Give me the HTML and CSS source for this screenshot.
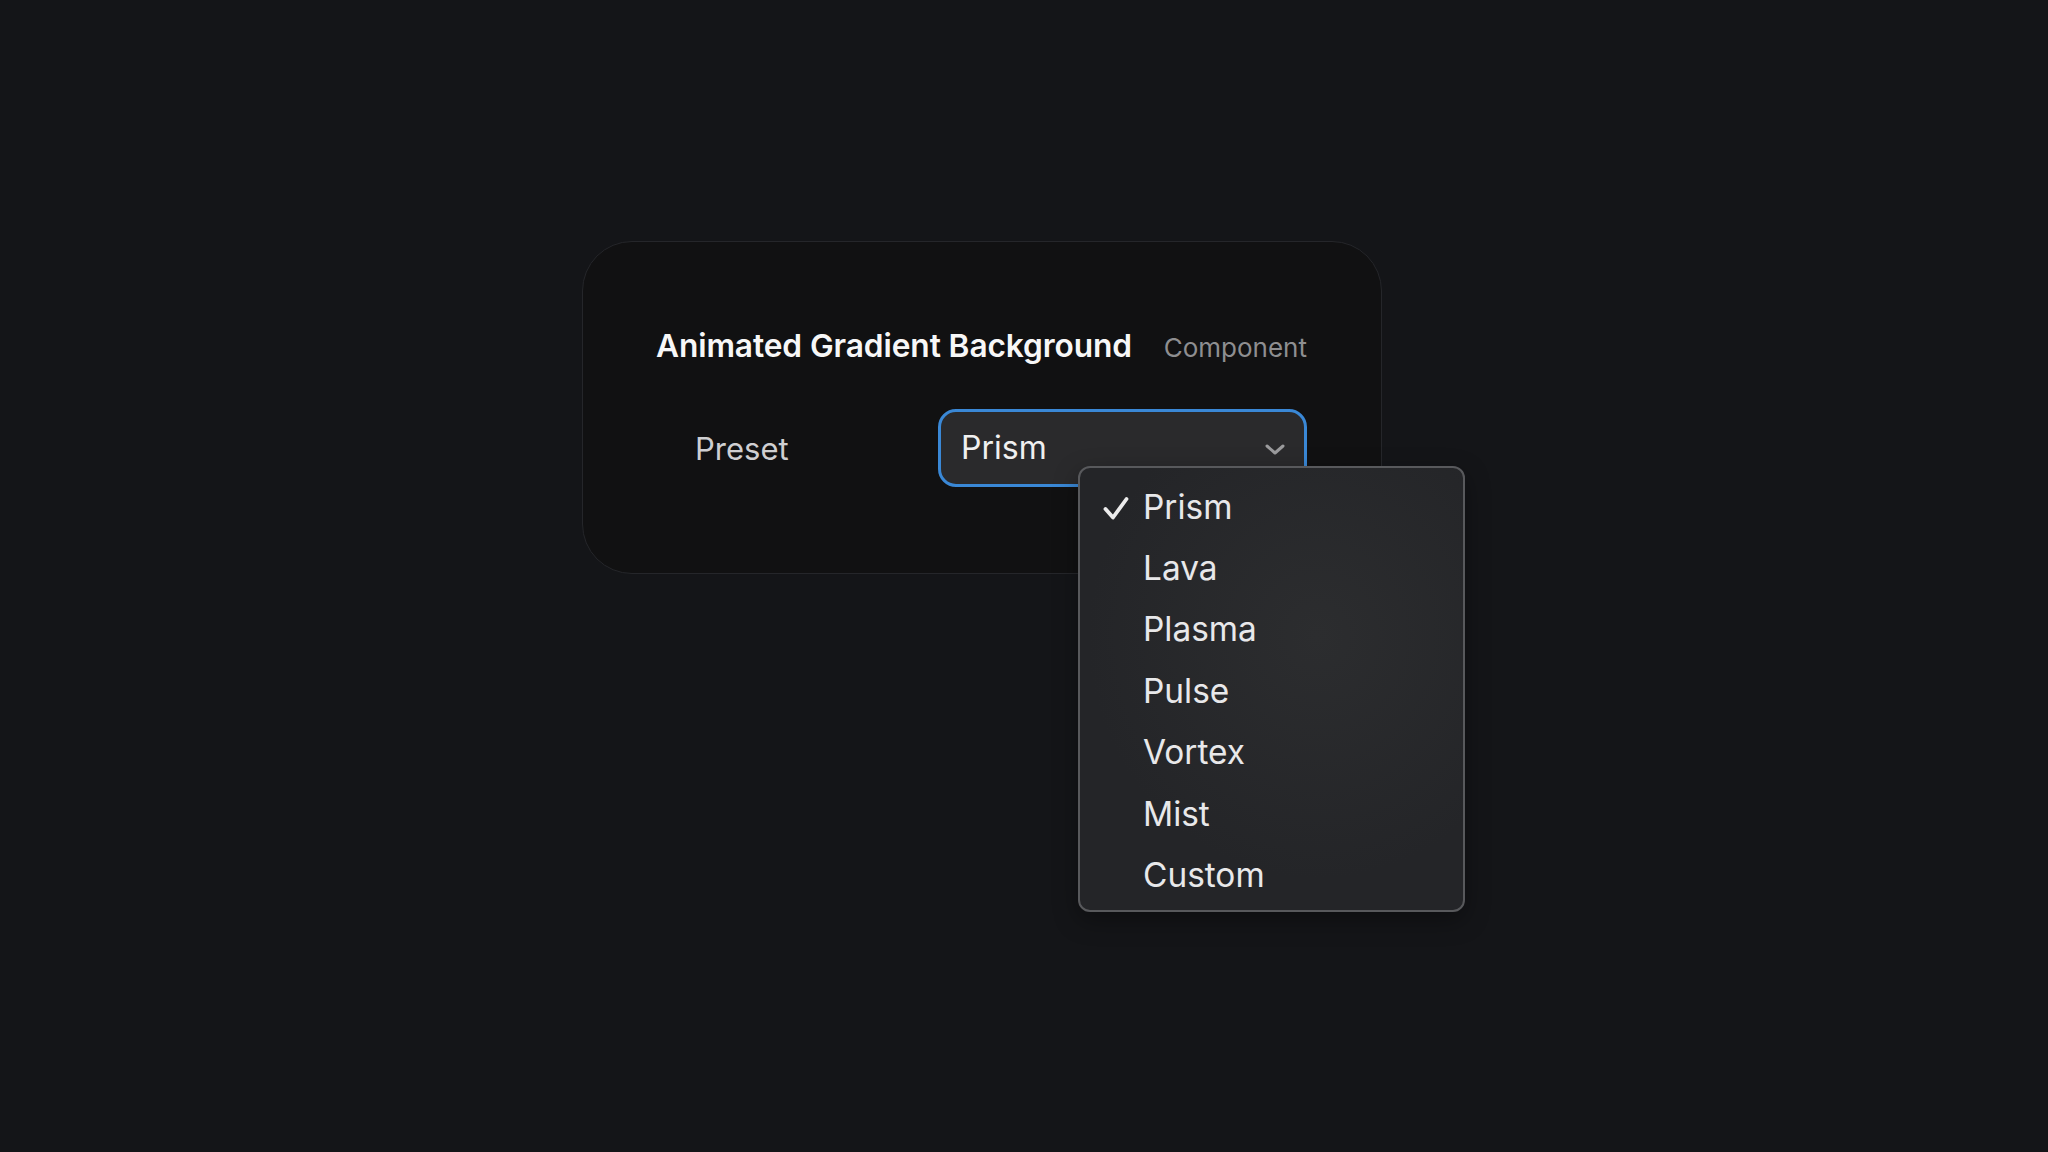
FILE: index.html
```html
<!DOCTYPE html>
<html lang="en">
<head>
<meta charset="utf-8">
<title>Animated Gradient Background</title>
<link rel="stylesheet" href="styles.css">
</head>
<body>
<main class="stage">
  <section class="card">
    <header class="card-head">
      <h1 class="title">Animated Gradient Background</h1>
      <span class="kind">Component</span>
    </header>
    <div class="field">
      <label class="field-label">Preset</label>
      <div class="select-wrap">
        <div class="select">
          <span class="select-value">Prism</span>
          <svg class="chevron" width="20" height="11" viewBox="0 0 20 11"><path d="M2 2 L10 9 L18 2" fill="none" stroke="#9b9b9d" stroke-width="3" stroke-linecap="round" stroke-linejoin="round"/></svg>
        </div>
        <ul class="menu">
          <li class="menu-item selected">
            <span class="check"><svg width="26" height="24" viewBox="0 0 26 24"><path d="M2.5 13 L10 21.5 L23.5 3" fill="none" stroke="#ececec" stroke-width="3.8" stroke-linecap="round" stroke-linejoin="round"/></svg></span>
            <span>Prism</span>
          </li>
          <li class="menu-item"><span class="check"></span><span>Lava</span></li>
          <li class="menu-item"><span class="check"></span><span>Plasma</span></li>
          <li class="menu-item"><span class="check"></span><span>Pulse</span></li>
          <li class="menu-item"><span class="check"></span><span>Vortex</span></li>
          <li class="menu-item"><span class="check"></span><span>Mist</span></li>
          <li class="menu-item"><span class="check"></span><span>Custom</span></li>
        </ul>
      </div>
    </div>
  </section>
</main>
</body>
</html>
```

FILE: styles.css
```css
html, body {
  margin: 0;
  padding: 0;
  background: #141518;
  font-family: Inter, "Noto Sans", "Liberation Sans", sans-serif;
  color: #e8e8e8;
}

.stage {
  width: 2048px;
  height: 1152px;
  box-sizing: border-box;
  padding: 241px 0 0 582px;
}

.card {
  width: 800px;
  height: 333px;
  box-sizing: border-box;
  background: #111112;
  border: 1.5px solid #25262a;
  border-radius: 50px;
  padding: 84px 74px 0 73px;
  display: flex;
  flex-direction: column;
  gap: 43px;
}

.card-head {
  display: flex;
  align-items: baseline;
  justify-content: space-between;
  height: 40px;
}

.title {
  margin: 0;
  font-size: 31.7px;
  font-weight: 600;
  color: #f7f7f7;
  letter-spacing: -0.1px;
  line-height: 40px;
}

.kind {
  font-size: 26px;
  color: #8e8e90;
  line-height: 40px;
}

.field {
  display: flex;
  align-items: center;
}

.field-label {
  font-size: 31px;
  color: #cfcfd1;
  padding-left: 39px;
  width: 282px;
  box-sizing: border-box;
}

.select-wrap {
  position: relative;
}

.select {
  width: 369px;
  height: 78px;
  box-sizing: border-box;
  background: #2a2a2c;
  border: 3px solid #3a88d6;
  border-radius: 18px;
  display: flex;
  align-items: center;
  justify-content: space-between;
  padding: 0 19px 2px 20px;
}

.select-value {
  font-size: 32px;
  color: #f0f0f0;
}

.chevron {
  display: block;
  margin-top: 4px;
}

.menu {
  position: absolute;
  left: 140px;
  top: 57px;
  width: 387px;
  box-sizing: border-box;
  margin: 0;
  padding: 8px 0 4px;
  list-style: none;
  border: 2px solid #58595c;
  border-radius: 12px;
  background:
    radial-gradient(ellipse 60% 55% at 62% 38%, #2c2d2f 0%, rgba(44,45,47,0) 100%),
    #242528;
  box-shadow: 0 8px 24px rgba(0,0,0,0.35);
}

.menu-item {
  height: 61.4px;
  display: flex;
  align-items: center;
  font-size: 33.4px;
  color: #e8e8ea;
}

.check {
  width: 63px;
  padding-left: 23px;
  box-sizing: border-box;
  display: flex;
  align-items: center;
}

.check svg {
  display: block;
  margin-top: 2px;
}
```
